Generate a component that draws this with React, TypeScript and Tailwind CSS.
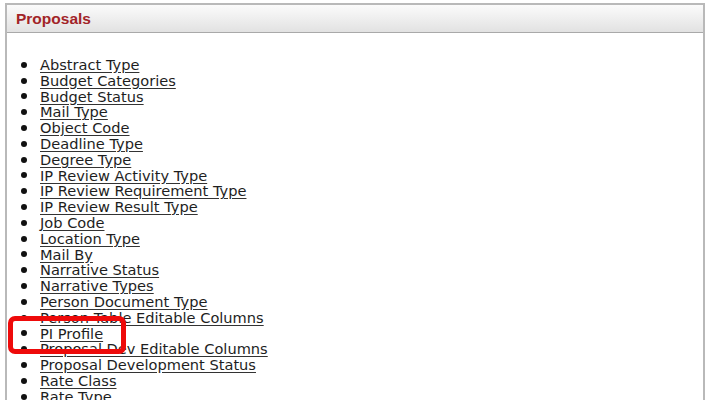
const items = [
  'Abstract Type',
  'Budget Categories',
  'Budget Status',
  'Mail Type',
  'Object Code',
  'Deadline Type',
  'Degree Type',
  'IP Review Activity Type',
  'IP Review Requirement Type',
  'IP Review Result Type',
  'Job Code',
  'Location Type',
  'Mail By',
  'Narrative Status',
  'Narrative Types',
  'Person Document Type',
  'Person Table Editable Columns',
  'PI Profile',
  'Proposal Dev Editable Columns',
  'Proposal Development Status',
  'Rate Class',
  'Rate Type',
  'Rate Type Class',
]

export default function App() {
  return (
    <div className="relative w-[720px] h-[400px] overflow-hidden bg-white">
      <div className="ml-[5px] mt-[3px] w-[700px] h-[420px] border-2 border-b-0 border-[#b9b9b9]">
        <div className="h-[28px] flex items-center pl-[9px] bg-gradient-to-b from-[#fbfbfb] to-[#e2e2e2] border-b border-[#a9a9a9]">
          <h2 className="text-[15.5px] font-bold text-[#a22428] font-['Liberation_Sans',Arial,sans-serif]">Proposals</h2>
        </div>
        <ul className="pt-[24px] font-['DejaVu_Sans',Verdana,sans-serif] text-[14.6px] leading-[15.8px] text-[#1e1e1e]">
          {items.map((item) => (
            <li key={item} className="flex items-center">
              <span className="w-[33px] flex justify-end pr-[13px]">
                <span className="w-[6px] h-[6px] rounded-full bg-[#111]" />
              </span>
              <a href="#" className="underline decoration-[#333] underline-offset-[2px]">
                {item}
              </a>
            </li>
          ))}
        </ul>
      </div>
      <div className="absolute left-[8px] top-[316px] w-[118px] h-[38px] border-[5px] border-[#ee0a0a] rounded-[7px]" />
    </div>
  )
}
